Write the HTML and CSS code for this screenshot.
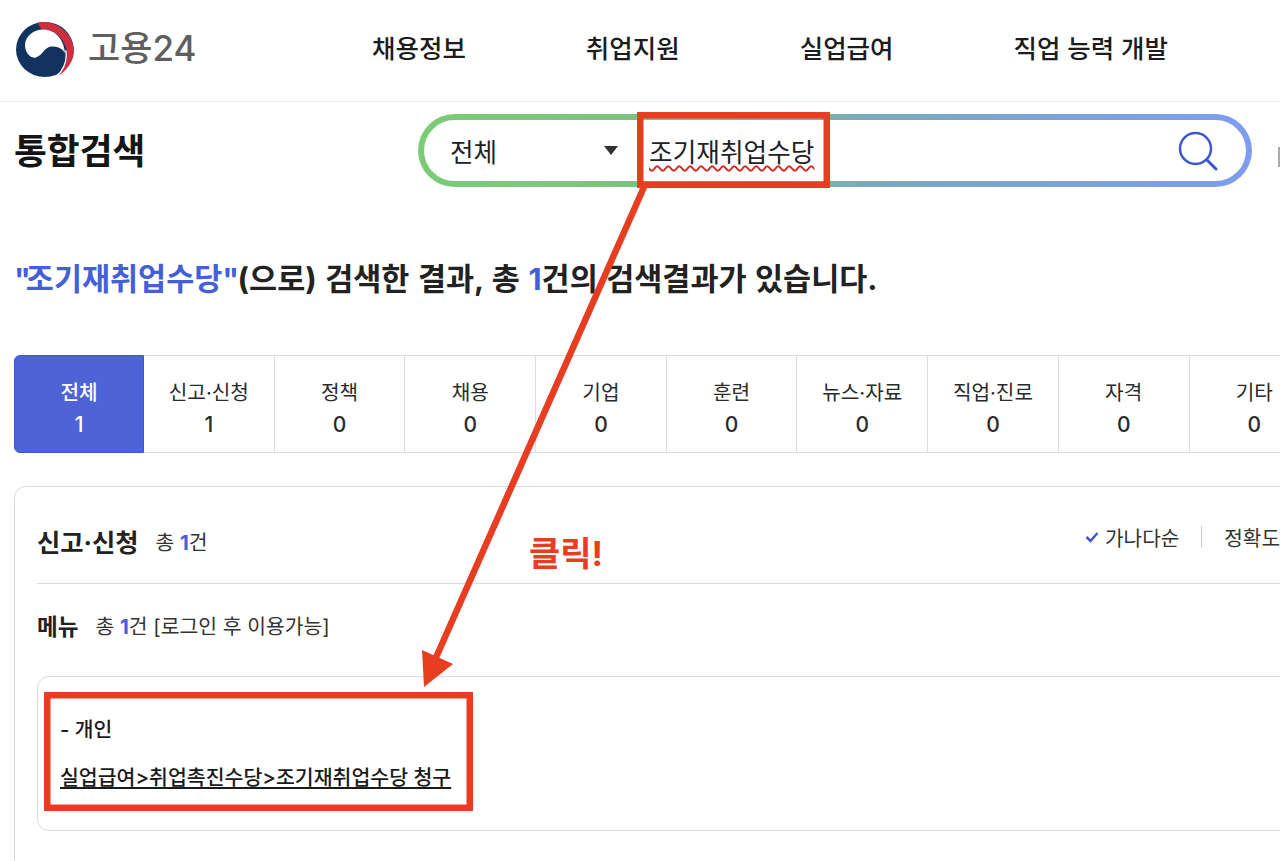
FILE: index.html
```html
<!DOCTYPE html>
<html lang="ko">
<head>
<meta charset="utf-8">
<title>통합검색 | 고용24</title>
<link rel="stylesheet" href="styles.css">
</head>
<body>
<div class="page">
  <header class="topbar">
    <a class="logo">
      <svg class="emblem" viewBox="48 65 175 166" width="58" height="55" aria-hidden="true">
        <ellipse cx="135" cy="148" rx="87" ry="83" fill="#12335f"/>
        <path d="M112 67C165 55 222 100 223 150C223 180 205 210 172 230C195 205 208 175 200 145C190 110 160 85 125 88Z" fill="#cf2e3f"/>
        <path d="M75 137C75 105 105 88 130 88C165 88 192 115 196 160C190 145 170 135 150 140C130 146 130 165 108 172C92 176 77 160 75 137Z" fill="#fff"/>
        <path d="M198 150C204 180 192 208 170 231" fill="none" stroke="#fff" stroke-width="4"/>
      </svg>
      <span class="logo-text">고용24</span>
    </a>
    <nav class="nav">
      <a class="nav-a">채용정보</a>
      <a class="nav-b">취업지원</a>
      <a class="nav-c">실업급여</a>
      <a class="nav-d">직업 능력 개발</a>
    </nav>
  </header>

  <section class="search-row">
    <h1>통합검색</h1>
    <div class="search">
      <div class="search-inner">
        <span class="scope">전체</span>
        <span class="caret"></span>
        <span class="divider"></span>
        <span class="query">조기재취업수당</span>
        <svg class="glass" viewBox="0 0 40 40" width="40" height="40" aria-hidden="true">
          <circle cx="17.500" cy="17.500" r="15.500" fill="none" stroke="#3f57cc" stroke-width="2.500"/>
          <path d="M29 29L38 38" stroke="#3f57cc" stroke-width="3" stroke-linecap="round"/>
        </svg>
      </div>
    </div>
    <span class="stub"></span>
  </section>

  <p class="summary"><b class="hl"><span class="open-q">"</span>조기재취업수당<span class="close-q">"</span></b>(으로) 검색한 결과, 총 <b class="hl">1</b>건의 검색결과가 있습니다.</p>

  <ul class="tabs">
    <li class="tab on"><span>전체</span><b>1</b></li>
    <li class="tab"><span>신고·신청</span><b>1</b></li>
    <li class="tab"><span>정책</span><b>0</b></li>
    <li class="tab"><span>채용</span><b>0</b></li>
    <li class="tab"><span>기업</span><b>0</b></li>
    <li class="tab"><span>훈련</span><b>0</b></li>
    <li class="tab"><span>뉴스·자료</span><b>0</b></li>
    <li class="tab"><span>직업·진로</span><b>0</b></li>
    <li class="tab"><span>자격</span><b>0</b></li>
    <li class="tab"><span>기타</span><b>0</b></li>
  </ul>

  <section class="card">
    <div class="card-head">
      <h2>신고·신청</h2>
      <span class="count">총 <b class="hl">1</b>건</span>
      <div class="sort">
        <svg class="check" viewBox="0 0 14 12" width="14" height="12" aria-hidden="true"><path d="M1.500 6L5.500 10L12.500 2" fill="none" stroke="#3f57cc" stroke-width="2.500"/></svg>
        <span>가나다순</span>
        <i class="sep"></i>
        <span>정확도</span>
      </div>
    </div>
    <div class="menu-head">
      <h3>메뉴</h3>
      <span class="count">총 <b class="hl">1</b>건 [로그인 후 이용가능]</span>
    </div>
    <div class="result">
      <p class="kind">- 개인</p>
      <a class="path">실업급여&gt;취업촉진수당&gt;조기재취업수당 청구</a>
    </div>
  </section>

  <svg class="marks" viewBox="0 0 1280 861" width="1280" height="861" aria-hidden="true">
    <rect x="640.250" y="115.250" width="186.500" height="69.500" fill="none" stroke="#e93d22" stroke-width="6.500"/>
    <rect x="47.250" y="695.250" width="422.500" height="112.500" fill="none" stroke="#e93d22" stroke-width="6.500"/>
    <path d="M644 187L434 662" stroke="#e93d22" stroke-width="6.500"/>
    <path d="M424 687L422 650L453 664Z" fill="#e93d22"/>
  </svg>
  <strong class="click">클릭!</strong>
</div>
</body>
</html>
```

FILE: styles.css
```css
* { box-sizing: border-box; }
html, body { margin: 0; padding: 0; background: #fff; }
body { font-family: Inter, "Noto Sans CJK KR", "Noto Sans", sans-serif; color: #111; }
.page { position: relative; width: 1280px; height: 861px; overflow: hidden; }
h1, h2, h3, p, ul { margin: 0; padding: 0; }
ul { list-style: none; }

.topbar { height: 102px; border-bottom: 1px solid #ececec; display: flex; padding: 22px 0 0 16px; }
.logo { display: flex; align-items: flex-start; gap: 14px; width: 356px; flex: none; }
.emblem { flex: none; }
.logo-text { font-size: 35px; line-height: 52px; font-weight: 500; color: #5f5f5f; white-space: nowrap; }
.nav { display: flex; font-size: 25.500px; font-weight: 500; line-height: 54px; color: #1c1c1c; }
.nav a { display: block; white-space: nowrap; }
.nav-a { margin-right: 120px; }
.nav-b { margin-right: 120px; }
.nav-c { margin-right: 120px; }

.search-row { display: flex; align-items: flex-start; padding: 12px 0 0 14px; height: 156px; }
.search-row h1 { font-size: 35.700px; line-height: 74px; font-weight: 700; width: 404px; flex: none; color: #151515; }
.search { width: 834px; height: 73px; flex: none; border-radius: 37px; padding: 6px; background: linear-gradient(90deg, #7ccb78 0%, #7ec27f 25%, #7aa9bd 55%, #7f9df0 100%); }
.search-inner { height: 61px; border-radius: 31px; background: #fff; display: flex; align-items: center; padding-left: 26px; }
.scope { font-size: 25.600px; width: 154px; color: #222; flex: none; }
.caret { width: 0; height: 0; border-left: 7px solid transparent; border-right: 7px solid transparent; border-top: 9px solid #333; flex: none; }
.divider { width: 1px; height: 28px; background: #eee; margin-left: 19px; flex: none; }
.query { font-size: 25.700px; margin-left: 11px; color: #222; text-decoration: underline wavy #d3261c 1.500px; text-underline-offset: 3px; white-space: nowrap; }
.glass { margin-left: auto; margin-right: 28px; flex: none; }
.stub { width: 4px; height: 20px; background: #aaa; margin: 33px 0 0 26px; flex: none; }

.summary { padding-left: 14px; font-size: 30.500px; line-height: 42px; font-weight: 700; color: #222; white-space: nowrap; height: 97px; word-spacing: 1.300px; }
.hl { color: #4560d6; font-weight: inherit; }
.open-q { letter-spacing: -5px; }
.close-q { letter-spacing: -1.500px; }

.tabs { display: flex; margin-left: 14px; width: 1320px; height: 98px; }
.tab { flex: none; width: 130.700px; border: 1px solid #dcdcdc; border-left: 0; display: flex; flex-direction: column; align-items: center; padding-top: 21px; font-size: 20.200px; line-height: 32px; color: #2a2a2a; }
.tab b { font-weight: 500; font-size: 21px; }
.tab.on { width: 130px; background: #4f63d8; color: #fff; border: 1px solid #3f57cc; border-radius: 6px 0 0 6px; }
.tab.on span { font-weight: 500; }

.card { margin: 33px 0 0 14px; width: 1340px; height: 420px; border: 1px solid #dcdcdc; border-radius: 12px; padding: 0 22px; }
.card-head { height: 97px; display: flex; align-items: center; border-bottom: 1px solid #dcdcdc; width: 1300px; padding: 12px 57px 0 0; }
.card-head h2 { font-size: 25.300px; font-weight: 700; color: #222; margin-right: 17px; }
.count { font-size: 20.400px; color: #333; white-space: nowrap; }
.count .hl { font-weight: 700; }
.sort { display: flex; align-items: center; font-size: 20.200px; color: #333; margin-left: auto; white-space: nowrap; flex: none; padding-bottom: 8px; }
.check { margin-right: 6px; }
.sep { width: 1px; height: 22px; background: #ccc; margin: 0 22px; }
.menu-head { display: flex; align-items: center; height: 82px; }
.menu-head h3 { font-size: 22.500px; font-weight: 700; color: #222; margin-right: 17px; }
.result { margin-top: 10px; width: 1280px; height: 155px; border: 1px solid #dcdcdc; border-radius: 12px; padding: 36px 22px 0; }
.kind { font-size: 20.400px; line-height: 34px; color: #1a1a1a; font-weight: 500; }
.path { display: inline-block; font-size: 20.500px; line-height: 30px; margin-top: 16px; color: #1a1a1a; text-decoration: underline; font-weight: 500; white-space: nowrap; }

.marks { position: absolute; left: 0; top: 0; pointer-events: none; }
.click { position: absolute; left: 529px; top: 530px; font-size: 34px; line-height: 48px; font-weight: 700; color: #e93d22; }
```
